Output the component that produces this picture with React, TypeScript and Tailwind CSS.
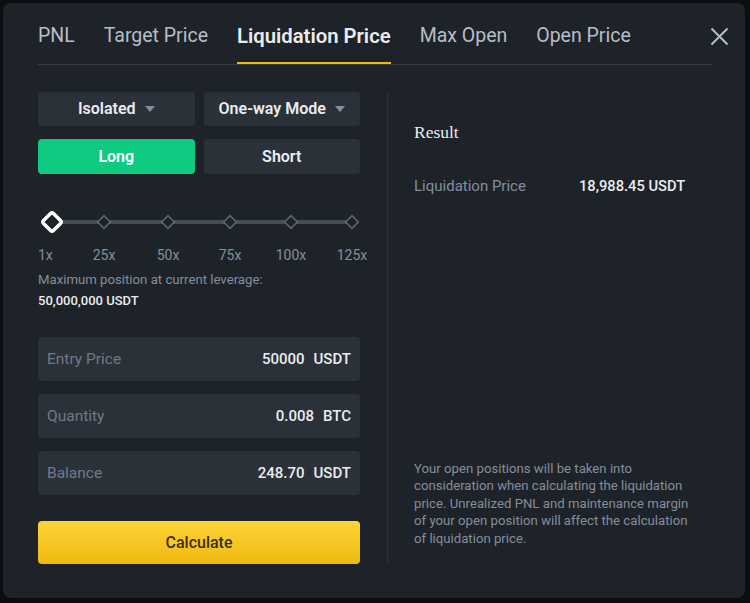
import { useState } from "react";

const tabs = ["PNL", "Target Price", "Liquidation Price", "Max Open", "Open Price"];

// leverage marks: label + x offset inside the slider (px from left of column)
const marks = [
  { label: "1x", x: 14 },
  { label: "25x", x: 66 },
  { label: "50x", x: 130 },
  { label: "75x", x: 192 },
  { label: "100x", x: 253 },
  { label: "125x", x: 314 },
];

function Caret() {
  return (
    <svg width="10" height="6" viewBox="0 0 10 6" className="ml-[9px]">
      <path d="M0 0h10L5 6z" fill="#848e9c" />
    </svg>
  );
}

function LeverageSlider() {
  return (
    <div>
      <svg width="322" height="28" viewBox="0 0 322 28" className="block">
        <line x1="14" y1="14" x2="314" y2="14" stroke="#474d57" strokeWidth="4" />
        {marks.slice(1).map((m) => (
          <rect
            key={m.label}
            x={m.x - 4.5}
            y={9.5}
            width="9"
            height="9"
            fill="#1e2329"
            stroke="#5e6673"
            strokeWidth="1.5"
            transform={`rotate(45 ${m.x} 14)`}
          />
        ))}
        <rect
          x={7}
          y={7}
          width="14"
          height="14"
          rx="2"
          fill="#1e2329"
          stroke="#ffffff"
          strokeWidth="3.5"
          transform="rotate(45 14 14)"
        />
      </svg>
      <div className="relative h-[20px] mt-[9px] text-[14px] leading-[20px] text-[#848e9c]">
        {marks.map((m, i) =>
          i === 0 ? (
            <span key={m.label} className="absolute left-0">{m.label}</span>
          ) : (
            <span
              key={m.label}
              className="absolute -translate-x-1/2"
              style={{ left: m.x }}
            >
              {m.label}
            </span>
          )
        )}
      </div>
    </div>
  );
}

function Field({ label, value, unit }: { label: string; value: string; unit: string }) {
  return (
    <div className="flex items-center h-[44px] rounded-[4px] bg-[#2b3139] pl-[9px] pr-[9px] pt-px">
      <span className="text-[15.5px] text-[#707a8a]">{label}</span>
      <span className="ml-auto text-[15px] font-medium text-[#eaecef]">{value}</span>
      <span className="ml-[9px] text-[15px] font-medium text-[#eaecef]">{unit}</span>
    </div>
  );
}

export default function App() {
  const [active, setActive] = useState("Liquidation Price");
  const [side, setSide] = useState<"long" | "short">("long");

  return (
    <div
      className="w-[750px] h-[603px] bg-[#0b0e11] p-[3px]"
      style={{ fontFamily: "Roboto, 'Noto Sans', sans-serif" }}
    >
      <div className="relative w-[742px] h-[595px] rounded-[8px] bg-[#1e2329] pl-[35px] pr-[33px] pt-[13px]">
        {/* Tabs */}
        <div className="flex gap-[29px] border-b border-[#363c45]">
          {tabs.map((t) => (
            <button
              key={t}
              onClick={() => setActive(t)}
              className={
                t === active
                  ? "pt-[6px] pb-[12px] leading-[28px] text-[20.3px] font-semibold text-[#eaecef] border-b-2 border-[#f0b90b]"
                  : "pt-[6px] pb-[12px] leading-[28px] text-[19.5px] text-[#b7bdc6] border-b-2 border-transparent"
              }
            >
              {t}
            </button>
          ))}
        </div>
        <button className="absolute left-[701px] top-[18px] w-[30px] h-[30px] flex items-center justify-center">
          <svg width="19" height="19" viewBox="0 0 19 19">
            <path d="M1.5 1.5l16 16M17.5 1.5l-16 16" stroke="#b7bdc6" strokeWidth="2" />
          </svg>
        </button>

        {/* Body */}
        <div className="flex mt-[27px] h-[472px]">
          <div className="w-[322px] flex flex-col">
            <div className="grid grid-cols-2 gap-[9px]">
              <button className="h-[34px] rounded-[4px] bg-[#2b3139] flex items-center justify-center text-[16px] font-semibold text-[#eaecef]">
                Isolated
                <Caret />
              </button>
              <button className="h-[34px] rounded-[4px] bg-[#2b3139] flex items-center justify-center text-[16px] font-semibold text-[#eaecef]">
                One-way Mode
                <Caret />
              </button>
            </div>
            <div className="grid grid-cols-2 gap-[9px] mt-[13px]">
              <button
                onClick={() => setSide("long")}
                className={
                  side === "long"
                    ? "h-[35px] rounded-[4px] bg-[#0ecb81] text-[16px] font-semibold text-white"
                    : "h-[35px] rounded-[4px] bg-[#2b3139] text-[16px] font-semibold text-[#eaecef]"
                }
              >
                Long
              </button>
              <button
                onClick={() => setSide("short")}
                className={
                  side === "short"
                    ? "h-[35px] rounded-[4px] bg-[#f6465d] text-[16px] font-semibold text-white"
                    : "h-[35px] rounded-[4px] bg-[#2b3139] text-[16px] font-semibold text-[#eaecef]"
                }
              >
                Short
              </button>
            </div>

            <div className="mt-[34px]">
              <LeverageSlider />
            </div>

            <p className="mt-[6px] text-[13.2px] leading-[18px] text-[#848e9c]">
              Maximum position at current leverage:
            </p>
            <p className="mt-[3px] text-[13px] leading-[18px] font-medium text-[#eaecef]">
              50,000,000 USDT
            </p>

            <div className="mt-[27px] flex flex-col gap-[13px]">
              <Field label="Entry Price" value="50000" unit="USDT" />
              <Field label="Quantity" value="0.008" unit="BTC" />
              <Field label="Balance" value="248.70" unit="USDT" />
            </div>

            <button className="mt-auto h-[43px] rounded-[4px] bg-gradient-to-b from-[#fcd535] to-[#f0b90b] text-[16px] font-medium text-[#3c2f05]">
              Calculate
            </button>
          </div>

          <div className="ml-[27px] w-px bg-[#2b3139]" />

          <div className="flex-1 pl-[26px] flex flex-col">
            <h3
              className="mt-[28px] text-[17.5px] leading-[24px] text-[#eaecef]"
              style={{ fontFamily: "'Liberation Serif', serif" }}
            >
              Result
            </h3>
            <div className="mt-[32px] flex text-[15px] leading-[20px]">
              <span className="w-[165px] text-[#848e9c]">Liquidation Price</span>
              <span className="text-[14.7px] font-medium text-[#eaecef]">18,988.45 USDT</span>
            </div>
            <p className="mt-auto mb-[17px] w-[282px] text-[13.2px] leading-[17.5px] text-[#848e9c]">
              Your open positions will be taken into consideration when calculating the
              liquidation price. Unrealized PNL and maintenance margin of your open position
              will affect the calculation of liquidation price.
            </p>
          </div>
        </div>
      </div>
    </div>
  );
}
